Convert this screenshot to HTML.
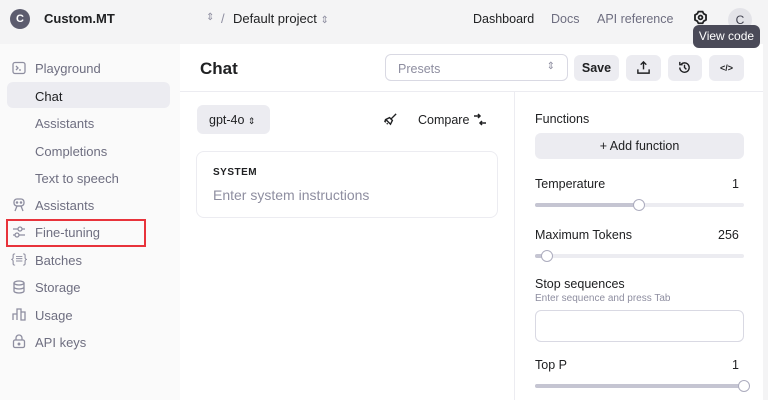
<!DOCTYPE html>
<html><head><style>
*{box-sizing:border-box;margin:0;padding:0}
body{width:768px;height:400px;overflow:hidden;background:#f4f4f5;font-family:"Liberation Sans",sans-serif;color:#202123;position:relative;font-size:13px}
.abs{position:absolute}
.top{left:0;top:0;width:768px;height:44px;background:#f4f4f5}
.side{left:0;top:44px;width:180px;height:356px;background:#fafafa}
.main{left:180px;top:44px;width:583px;height:356px;background:#fff}
.nav{position:absolute;left:35px;font-size:13px;color:#6e6e80}
.ic{position:absolute;left:11px;width:16px;height:16px}
.btn{position:absolute;background:#ececf1;border-radius:6px}
.sl{position:absolute;left:535px;width:209px;height:4px;background:#ececf1;border-radius:2px}
.slf{position:absolute;left:0;top:0;height:4px;background:#c5c5d2;border-radius:2px}
.knob{position:absolute;top:-4px;width:12px;height:12px;border-radius:50%;background:#fff;border:1.5px solid #acacbe}
</style></head><body>
<div class="abs top"></div>
<div class="abs" style="left:10px;top:9px;width:20px;height:20px;border-radius:50%;background:#5c5c6e;color:#fff;font-size:11px;font-weight:bold;text-align:center;line-height:20px">C</div>
<div class="abs" style="left:44px;top:11px;font-weight:bold;font-size:13px">Custom.MT</div>
<div class="abs" style="left:206px;top:12px;font-size:10px;color:#8e8ea0">⇕</div>
<div class="abs" style="left:221px;top:11px;color:#8e8ea0">/</div>
<div class="abs" style="left:233px;top:11px;font-size:13px">Default project <span style="font-size:10px;color:#8e8ea0">⇕</span></div>
<div class="abs" style="left:473px;top:12px;font-size:12.5px">Dashboard</div>
<div class="abs" style="left:551px;top:12px;font-size:12.5px;color:#6e6e80">Docs</div>
<div class="abs" style="left:597px;top:12px;font-size:12.5px;color:#6e6e80">API reference</div>
<svg class="abs" style="left:692px;top:10px" width="17" height="17" viewBox="0 0 16 16" fill="none" stroke="#202123" stroke-width="1.7"><path d="M6 1.5h4l1 2 2.2 1.2v4.6L11 10.5l-1 2H6l-1-2-2.2-1.2V4.7L5 3.5z"/><circle cx="8" cy="7" r="1.8"/></svg>
<div class="abs" style="left:728px;top:8px;width:24px;height:24px;border-radius:50%;background:#e3e3e8;text-align:center;line-height:24px;font-size:12px;color:#40414f">C</div>
<div class="abs side"></div>
<div class="abs main"></div>
<div class="abs" style="left:763px;top:44px;width:5px;height:356px;background:#f4f4f5"></div>
<div class="abs" style="left:693px;top:25px;width:67px;height:23px;border-radius:6px;background:#4a4a58;color:#fff;font-size:12px;text-align:center;line-height:23px;z-index:3">View code</div>

<svg class="ic" style="top:60px" viewBox="0 0 16 16" fill="none" stroke="#8e8ea0" stroke-width="1.3"><rect x="2" y="2.5" width="12" height="11" rx="2"/><path d="M5 6l2 2-2 2M8 10h2"/></svg>
<div class="nav" style="top:61px">Playground</div>
<div class="abs" style="left:7px;top:82px;width:163px;height:26px;border-radius:6px;background:#ececf1"></div>
<div class="nav" style="top:89px;color:#202123">Chat</div>
<div class="nav" style="top:116px">Assistants</div>
<div class="nav" style="top:144px">Completions</div>
<div class="nav" style="top:171px">Text to speech</div>
<svg class="ic" style="top:197px" viewBox="0 0 16 16" fill="none" stroke="#8e8ea0" stroke-width="1.3"><rect x="3" y="2" width="10" height="7" rx="3"/><circle cx="6" cy="5.5" r=".6"/><circle cx="10" cy="5.5" r=".6"/><path d="M4 14l2-5h4l2 5"/></svg>
<div class="nav" style="top:198px">Assistants</div>
<div class="abs" style="left:6px;top:219px;width:140px;height:28px;border:2px solid #e8333b"></div>
<svg class="ic" style="top:224px" viewBox="0 0 16 16" fill="none" stroke="#8e8ea0" stroke-width="1.3"><path d="M2 5h5M11 5h3M2 11h2M8 11h6"/><circle cx="9" cy="5" r="2"/><circle cx="6" cy="11" r="2"/></svg>
<div class="nav" style="top:225px">Fine-tuning</div>
<div class="abs" style="left:11px;top:251px;font-size:13px;color:#8e8ea0">{≡}</div>
<div class="nav" style="top:253px">Batches</div>
<svg class="ic" style="top:279px" viewBox="0 0 16 16" fill="none" stroke="#8e8ea0" stroke-width="1.3"><ellipse cx="8" cy="4" rx="5" ry="2"/><path d="M3 4v8c0 1 2 2 5 2s5-1 5-2V4M3 8c0 1 2 2 5 2s5-1 5-2"/></svg>
<div class="nav" style="top:280px">Storage</div>
<svg class="ic" style="top:306px" viewBox="0 0 16 16" fill="none" stroke="#8e8ea0" stroke-width="1.3"><path d="M2 14V8h4v6M6 14V3h4v11M10 14V6h4v8z"/></svg>
<div class="nav" style="top:308px">Usage</div>
<svg class="ic" style="top:333px" viewBox="0 0 16 16" fill="none" stroke="#8e8ea0" stroke-width="1.3"><rect x="2.5" y="7" width="11" height="7.5" rx="1.5"/><path d="M5 7V5a3 3 0 016 0v2"/><circle cx="8" cy="11" r=".8"/></svg>
<div class="nav" style="top:335px">API keys</div>

<div class="abs" style="left:200px;top:59px;font-size:17px;font-weight:bold">Chat</div>
<div class="abs" style="left:180px;top:91px;width:583px;height:1px;background:#ececf1"></div>
<div class="abs" style="left:385px;top:54px;width:183px;height:27px;border:1px solid #d9d9e3;border-radius:6px;color:#8e8ea0;font-size:12.5px;padding:7px 12px">Presets<span style="position:absolute;right:12px;top:6px;font-size:10px">⇕</span></div>
<div class="btn" style="left:574px;top:55px;width:45px;height:26px;text-align:center;line-height:26px;font-weight:bold;font-size:12.5px">Save</div>
<div class="btn" style="left:626px;top:55px;width:35px;height:26px"></div>
<svg class="abs" style="left:636px;top:60px" width="15" height="15" viewBox="0 0 16 16" fill="none" stroke="#202123" stroke-width="1.5"><path d="M8 10V2M5 5l3-3 3 3M2 10v4h12v-4"/></svg>
<div class="btn" style="left:668px;top:55px;width:34px;height:26px"></div>
<svg class="abs" style="left:677px;top:60px" width="15" height="15" viewBox="0 0 16 16" fill="none" stroke="#202123" stroke-width="1.5"><path d="M3 8a5 5 0 101.5-3.5M3 2v3h3M8 5v3l2 2"/></svg>
<div class="btn" style="left:709px;top:55px;width:35px;height:26px;text-align:center;line-height:26px;font-size:9px;font-weight:bold">&lt;/&gt;</div>

<div class="abs" style="left:514px;top:92px;width:1px;height:308px;background:#ececf1"></div>
<div class="btn" style="left:197px;top:105px;width:73px;height:29px;font-size:12.5px;padding:8px 12px">gpt-4o <span style="font-size:9px">⇕</span></div>
<svg class="abs" style="left:383px;top:112px" width="15" height="15" viewBox="0 0 16 16" fill="none" stroke="#202123" stroke-width="1.5"><path d="M14 2L9 7M3 8l5 5 2-4-3-3zM3 8l-1 2 1 1M5 12l-1 1"/></svg>
<div class="abs" style="left:418px;top:113px;font-size:12.5px">Compare</div>
<svg class="abs" style="left:472px;top:112px" width="16" height="16" viewBox="0 0 16 16" fill="none" stroke="#202123" stroke-width="1.5"><path d="M2 4h6M6 2l2 2-2 2M14 11H8M10 9l-2 2 2 2"/></svg>
<div class="abs" style="left:196px;top:151px;width:302px;height:67px;border:1px solid #ececf1;border-radius:8px"></div>
<div class="abs" style="left:213px;top:167px;font-size:10px;font-weight:bold;letter-spacing:.5px">SYSTEM</div>
<div class="abs" style="left:213px;top:187px;font-size:14px;color:#8e8ea0">Enter system instructions</div>

<div class="abs" style="left:535px;top:112px;font-size:12.5px">Functions</div>
<div class="btn" style="left:535px;top:133px;width:209px;height:26px;text-align:center;line-height:26px;font-size:12.5px">+ Add function</div>
<div class="abs" style="left:535px;top:177px;font-size:12.5px">Temperature</div>
<div class="abs" style="left:732px;top:177px;font-size:12.5px">1</div>
<div class="sl" style="top:203px"><div class="slf" style="width:104px"></div><div class="knob" style="left:98px"></div></div>
<div class="abs" style="left:535px;top:228px;font-size:12.5px">Maximum Tokens</div>
<div class="abs" style="left:718px;top:228px;font-size:12.5px">256</div>
<div class="sl" style="top:254px"><div class="slf" style="width:12px"></div><div class="knob" style="left:6px"></div></div>
<div class="abs" style="left:535px;top:277px;font-size:12.5px">Stop sequences</div>
<div class="abs" style="left:535px;top:293px;font-size:10px;color:#8e8ea0">Enter sequence and press Tab</div>
<div class="abs" style="left:535px;top:310px;width:209px;height:32px;border:1px solid #d9d9e3;border-radius:6px"></div>
<div class="abs" style="left:535px;top:358px;font-size:12.5px">Top P</div>
<div class="abs" style="left:732px;top:358px;font-size:12.5px">1</div>
<div class="sl" style="top:384px"><div class="slf" style="width:209px"></div><div class="knob" style="left:203px"></div></div>
</body></html>
